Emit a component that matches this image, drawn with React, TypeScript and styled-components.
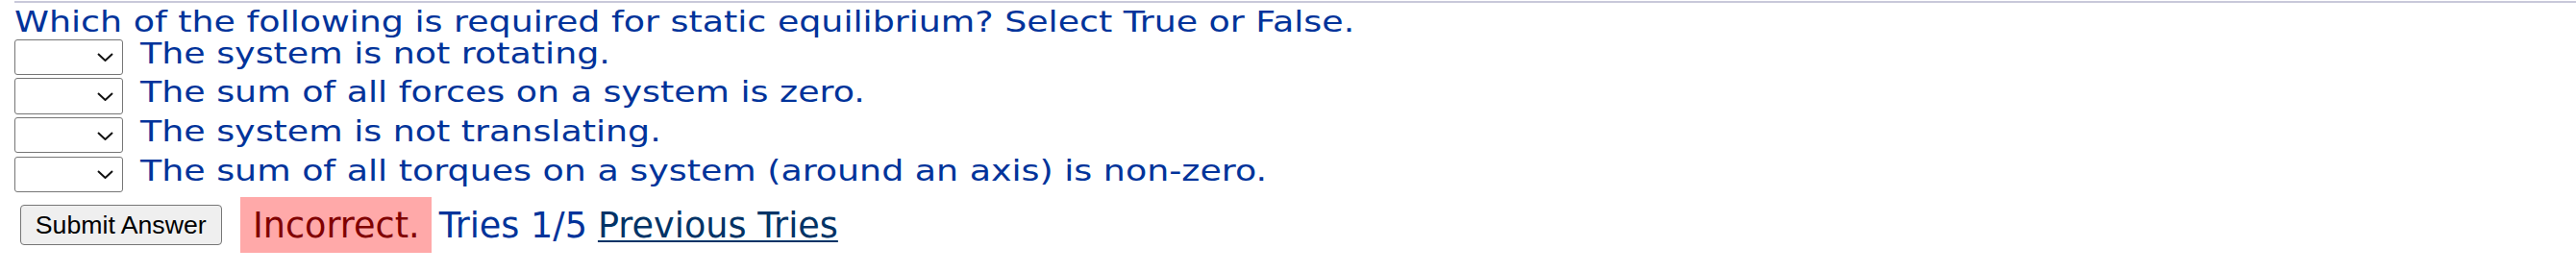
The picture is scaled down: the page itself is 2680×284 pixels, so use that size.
import React from "react";
import styled, { createGlobalStyle } from "styled-components";

const GlobalStyle = createGlobalStyle`
  html, body {
    margin: 0;
    padding: 0;
    background: #ffffff;
  }
`;

const Page = styled.div`
  padding: 1px 0 0 15px;
  font-family: "DejaVu Sans", Verdana, sans-serif;
  color: #00339a;
`;

const TopRule = styled.div`
  height: 2px;
  background: #c9c9da;
`;

const WideText = styled.span`
  display: inline-block;
  font-size: 30.5px;
  line-height: 35.5px;
  white-space: nowrap;
  transform: scaleX(1.192);
  transform-origin: 0 50%;
`;

const Prompt = styled.div`
  margin-top: 2px;
  height: 35.5px;
`;

const Rows = styled.div`
  display: flex;
  flex-direction: column;
`;

const Row = styled.div`
  display: flex;
  align-items: flex-start;
  gap: 18px;
  height: 40.8px;
`;

const SelectWrap = styled.div`
  position: relative;
  width: 113px;
  height: 37.4px;
  flex: none;
`;

const Select = styled.select`
  appearance: none;
  -webkit-appearance: none;
  box-sizing: border-box;
  width: 100%;
  height: 100%;
  margin: 0;
  padding: 0 8px;
  border: 1.5px solid #767676;
  border-radius: 3px;
  background: #ffffff;
  font-family: "Liberation Sans", Arial, sans-serif;
  font-size: 26.67px;
  color: #000;
`;

const Chevron = styled.svg`
  position: absolute;
  right: 10px;
  top: 14.5px;
  width: 17px;
  height: 9px;
  pointer-events: none;
`;

const Statement = styled(WideText)`
  margin-top: -2.9px;
`;

const FeedbackRow = styled.div`
  display: flex;
  align-items: center;
  margin-top: 1.5px;
  padding-left: 6px;
`;

const SubmitButton = styled.button`
  box-sizing: border-box;
  width: 209.5px;
  height: 42.4px;
  margin: 0 19.5px 0 0;
  padding: 0;
  border: 1.5px solid #767676;
  border-radius: 4px;
  background: #efefef;
  font-family: "Liberation Sans", Arial, sans-serif;
  font-size: 26.67px;
  color: #000;
  flex: none;
`;

const Status = styled.div`
  display: flex;
  align-items: baseline;
  font-size: 36.6px;
  line-height: 42.4px;
  white-space: nowrap;
`;

const Verdict = styled.span<{ $ok?: boolean }>`
  display: inline-block;
  padding: 8.5px 12px 6.8px 13px;
  background: ${(p) => (p.$ok ? "#aaffaa" : "#ffa9a9")};
  color: ${(p) => (p.$ok ? "#006600" : "#800000")};
`;

const Tries = styled.span`
  margin-left: 8px;
  margin-right: 11px;
`;

const PrevLink = styled.a`
  color: #003366;
  text-decoration: underline;
  text-decoration-thickness: 2.3px;
  text-underline-offset: 3px;
  cursor: pointer;
`;

const statements = [
  "The system is not rotating.",
  "The sum of all forces on a system is zero.",
  "The system is not translating.",
  "The sum of all torques on a system (around an axis) is non-zero.",
];

export default function App() {
  return (
    <>
      <GlobalStyle />
      <Page>
        <TopRule />
        <Prompt>
          <WideText>
            Which of the following is required for static equilibrium? Select True or False.
          </WideText>
        </Prompt>
        <Rows>
          {statements.map((s) => (
            <Row key={s}>
              <SelectWrap>
                <Select defaultValue="">
                  <option value=""></option>
                  <option value="true">True</option>
                  <option value="false">False</option>
                </Select>
                <Chevron viewBox="0 0 17 9">
                  <path d="M1 1 L8.5 8 L16 1" fill="none" stroke="#111" strokeWidth="2" />
                </Chevron>
              </SelectWrap>
              <Statement>{s}</Statement>
            </Row>
          ))}
        </Rows>
        <FeedbackRow>
          <SubmitButton type="button">Submit Answer</SubmitButton>
          <Status>
            <Verdict>Incorrect.</Verdict>
            <Tries>Tries 1/5</Tries>
            <PrevLink>Previous Tries</PrevLink>
          </Status>
        </FeedbackRow>
      </Page>
    </>
  );
}
